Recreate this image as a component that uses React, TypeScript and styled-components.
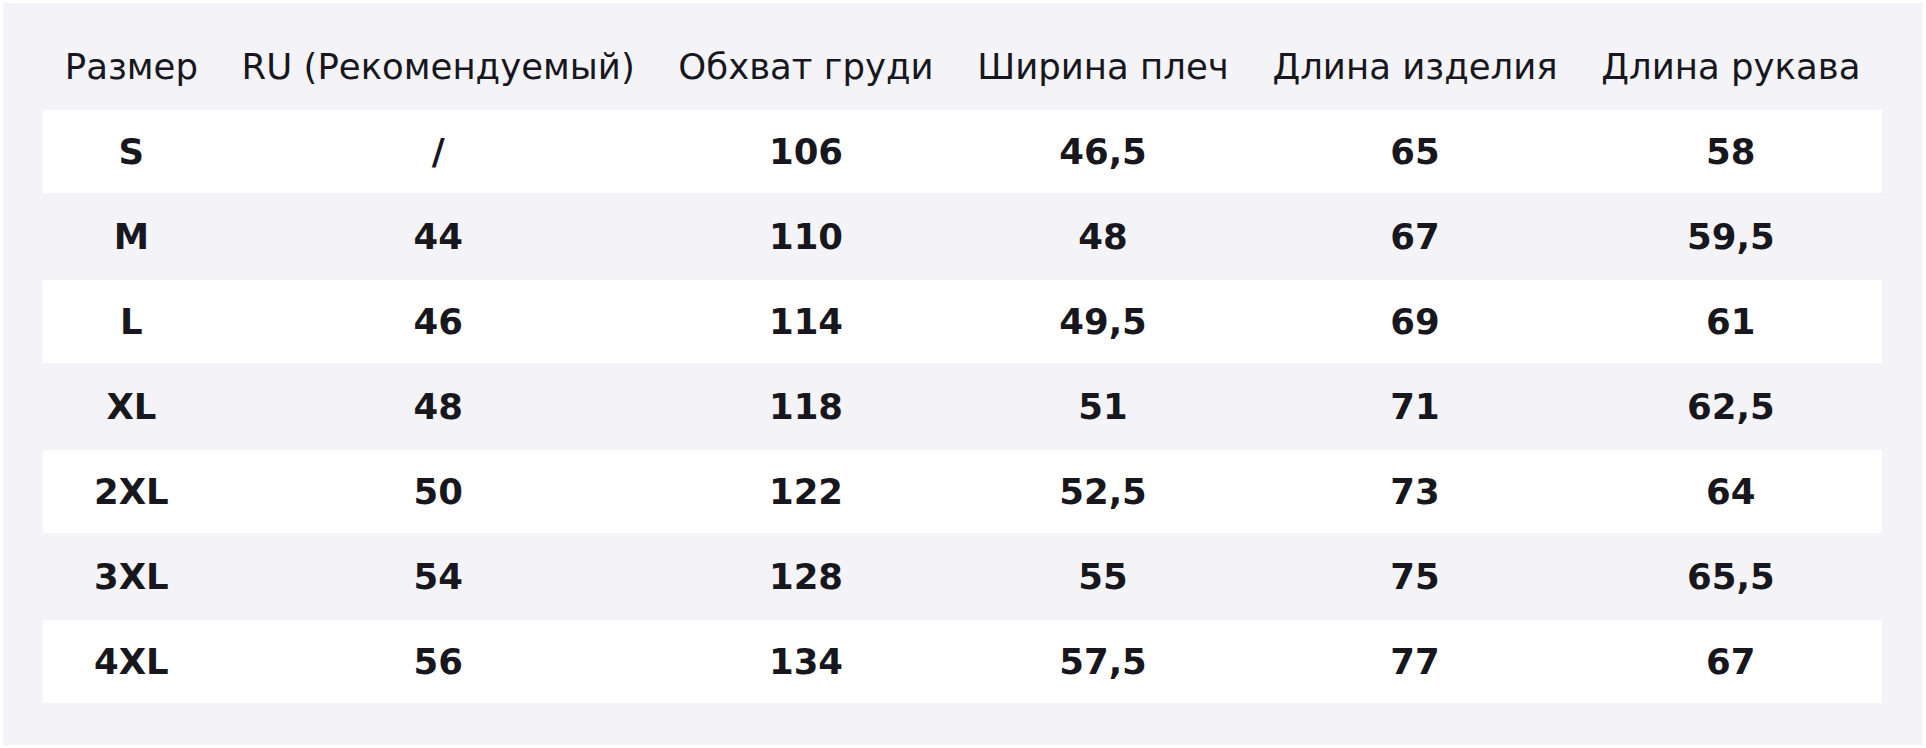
import React from "react";
import styled, { createGlobalStyle } from "styled-components";

const GlobalStyle = createGlobalStyle`
  html,
  body {
    margin: 0;
    padding: 0;
    background: #ffffff;
  }
  body {
    font-family: "DejaVu Sans", "Liberation Sans", sans-serif;
    color: #17171d;
  }
`;

const Page = styled.div`
  padding: 3px;
`;

const Panel = styled.section`
  box-sizing: border-box;
  width: 1920px;
  height: 742px;
  padding: 40px 40px 42px;
  background: #f4f4f8;
`;

const Table = styled.table`
  border-collapse: collapse;
  border-spacing: 0;
  font-size: 35.5px;
  white-space: nowrap;
`;

const HeadCell = styled.th`
  height: 67px;
  box-sizing: border-box;
  padding: 3px 21.8px 22px;
  font-weight: 400;
  line-height: 42px;
  text-align: center;
  vertical-align: top;
`;

const Row = styled.tr<{ $light: boolean }>`
  height: ${({ $light }) => ($light ? 83 : 87)}px;
  background: ${({ $light }) => ($light ? "#ffffff" : "transparent")};
`;

const Cell = styled.td`
  padding: 0 21.8px;
  font-weight: 700;
  line-height: 42px;
  text-align: center;
  vertical-align: middle;
`;

const columns = [
  "Размер",
  "RU (Рекомендуемый)",
  "Обхват груди",
  "Ширина плеч",
  "Длина изделия",
  "Длина рукава",
];

const rows = [
  ["S", "/", "106", "46,5", "65", "58"],
  ["M", "44", "110", "48", "67", "59,5"],
  ["L", "46", "114", "49,5", "69", "61"],
  ["XL", "48", "118", "51", "71", "62,5"],
  ["2XL", "50", "122", "52,5", "73", "64"],
  ["3XL", "54", "128", "55", "75", "65,5"],
  ["4XL", "56", "134", "57,5", "77", "67"],
];

export default function App() {
  return (
    <Page>
      <GlobalStyle />
      <Panel>
        <Table>
          <thead>
            <tr>
              {columns.map((c) => (
                <HeadCell key={c}>{c}</HeadCell>
              ))}
            </tr>
          </thead>
          <tbody>
            {rows.map((r, i) => (
              <Row key={r[0]} $light={i % 2 === 0}>
                {r.map((v, j) => (
                  <Cell key={j}>{v}</Cell>
                ))}
              </Row>
            ))}
          </tbody>
        </Table>
      </Panel>
    </Page>
  );
}
